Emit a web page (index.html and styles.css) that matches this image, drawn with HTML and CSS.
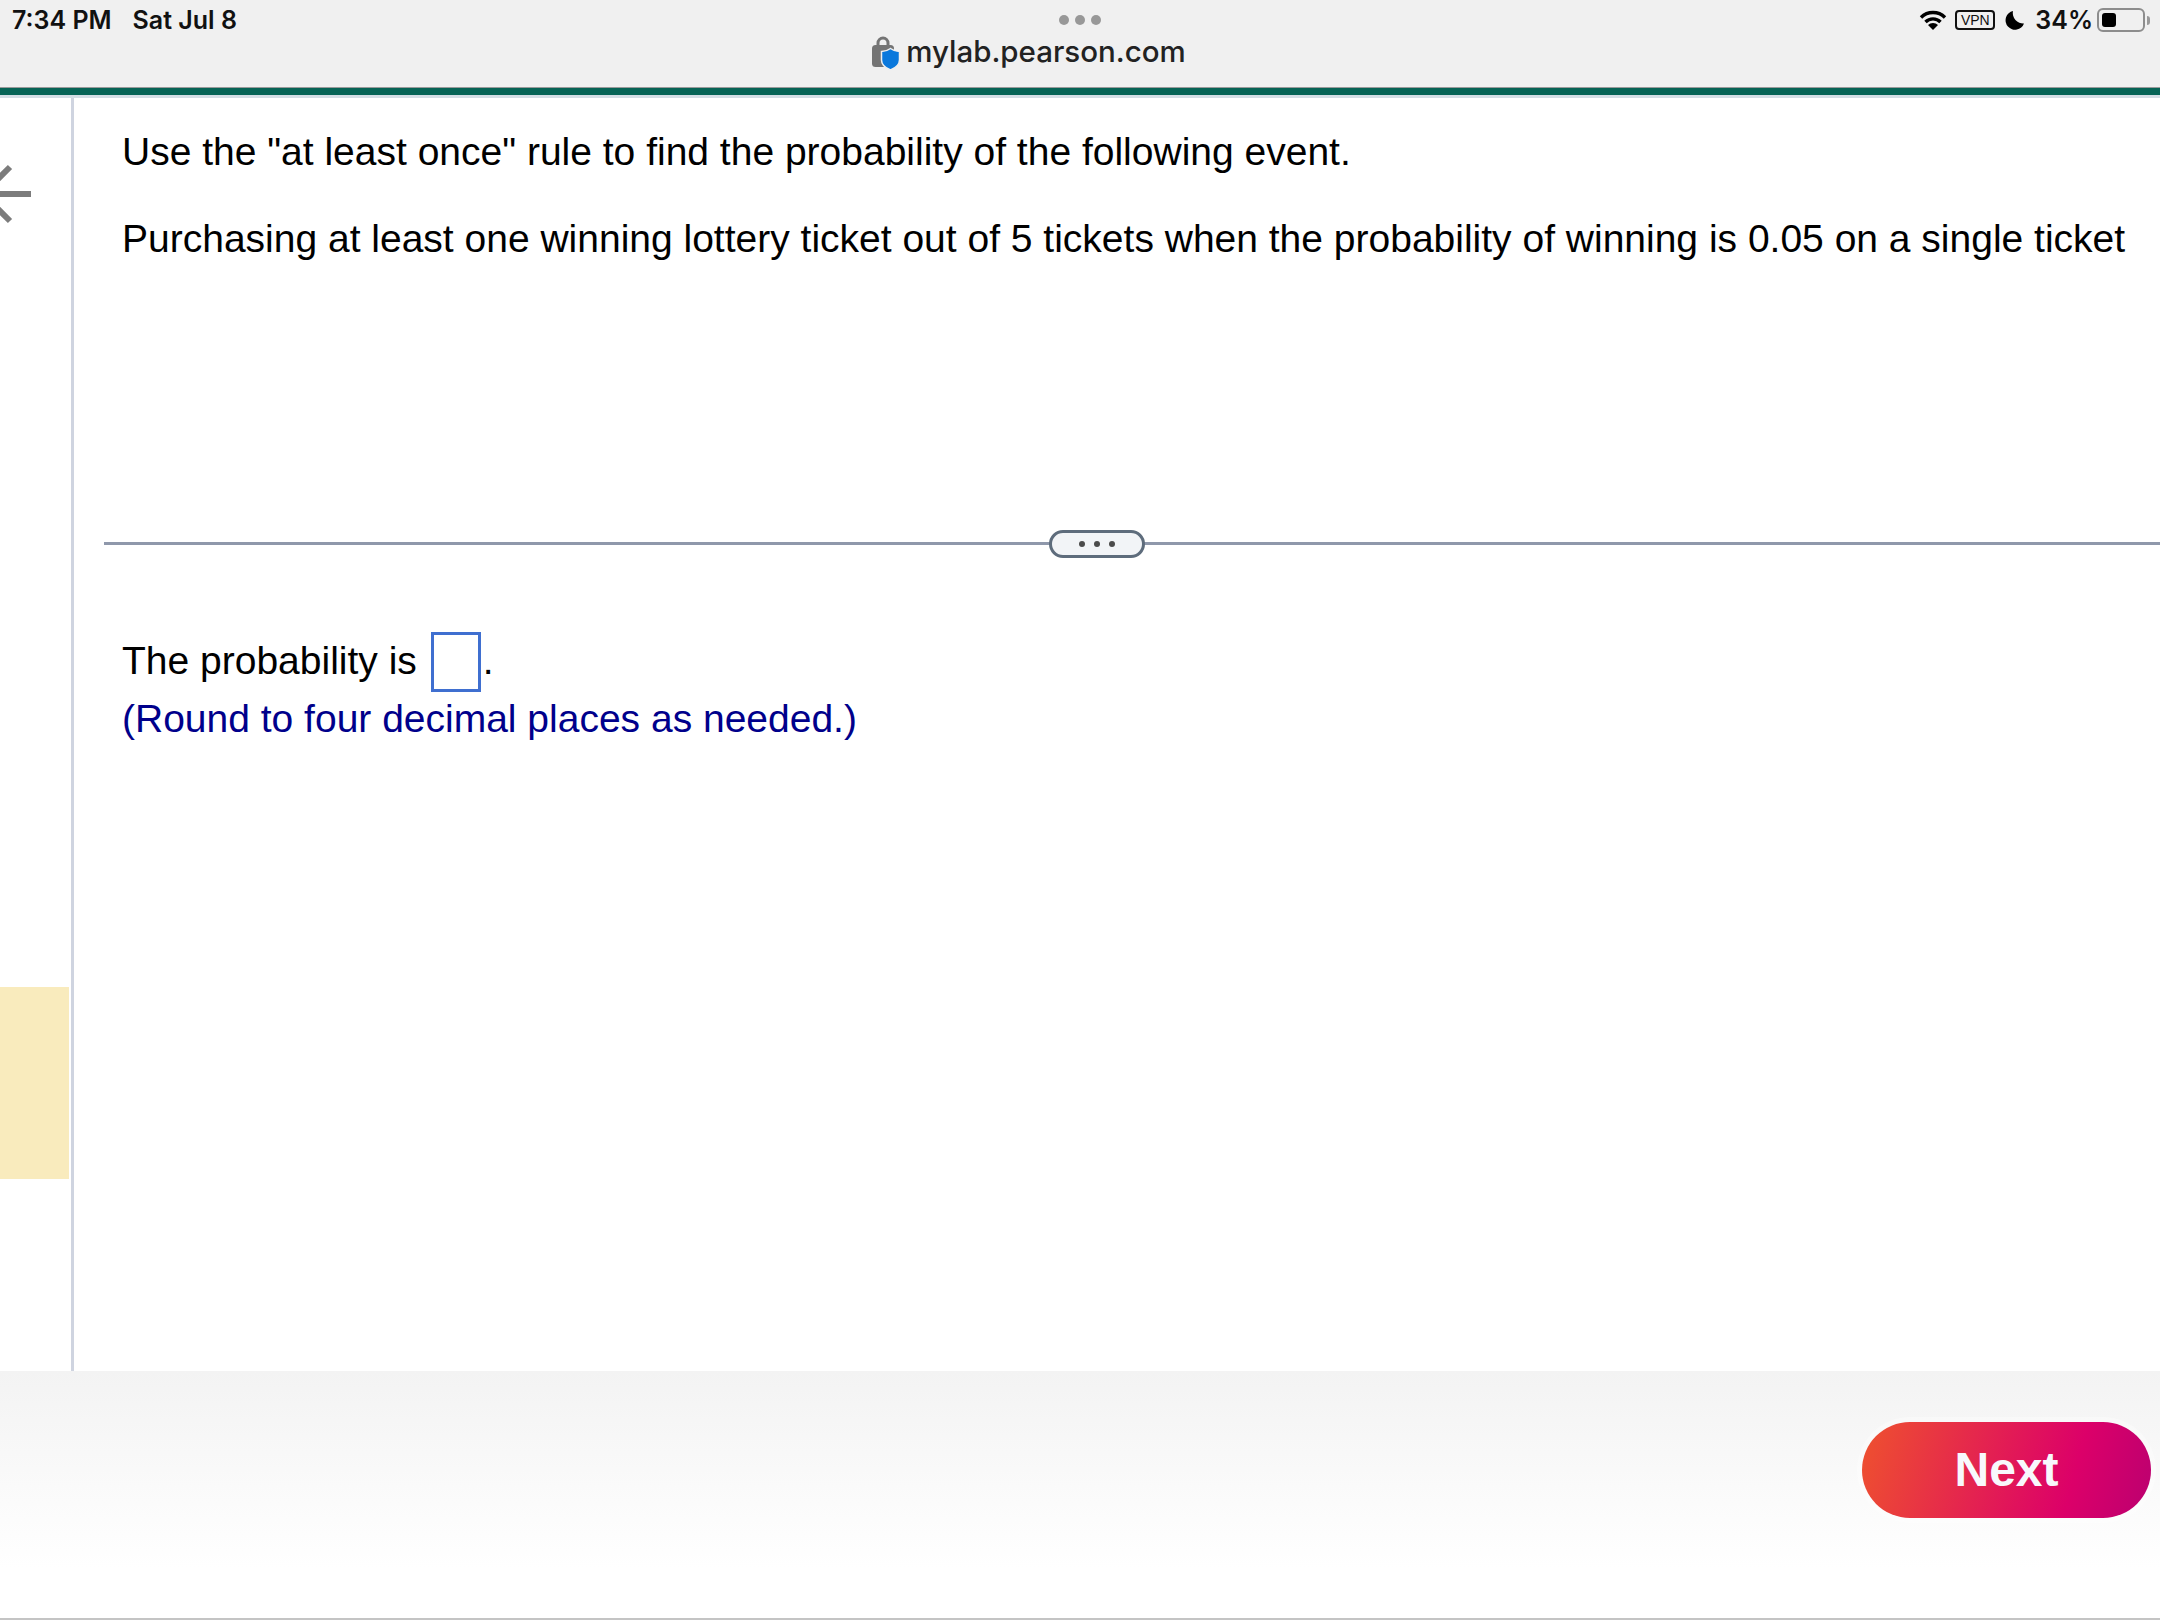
FILE: index.html
```html
<!DOCTYPE html>
<html lang="en">
<head>
<meta charset="utf-8">
<title>mylab.pearson.com</title>
<link rel="stylesheet" href="styles.css">
</head>
<body>
<header class="topbar">
  <div class="clock"><span>7:34 PM</span><span>Sat Jul 8</span></div>
  <div class="address">
    <div class="dots"><i></i><i></i><i></i></div>
    <div class="url">
      <svg class="lock" width="30" height="36" viewBox="0 0 30 36">
        <path d="M7 10V8a5 5 0 0 1 10 0v2" fill="none" stroke="#747474" stroke-width="3"/>
        <rect x="1" y="10" width="22" height="22" rx="3.5" fill="#747474"/>
        <path d="M19.500 13.500c2.500 2 5 2.800 9 3v8.500c0 4.800-3.500 7.800-9 10-5.500-2.200-9-5.200-9-10v-8.500c4-.2 6.500-1 9-3z" fill="#0a78dc" stroke="#f0f0f0" stroke-width="1.500"/>
      </svg>
      <span>mylab.pearson.com</span>
    </div>
  </div>
  <div class="status">
    <svg width="28" height="20" viewBox="0 0 28 20">
      <path d="M2 7.500a17 17 0 0 1 24 0M6.500 12a10.500 10.500 0 0 1 15 0" fill="none" stroke="#000" stroke-width="3.400"/>
      <path d="M14 20l-5-5a7 7 0 0 1 10 0z" fill="#000"/>
    </svg>
    <span class="vpn">VPN</span>
    <svg class="moon" width="20" height="20" viewBox="0 0 20 20">
      <path d="M8 1a9.500 9.500 0 1 0 11 12.500A10.500 10.500 0 0 1 8 1z" fill="#000"/>
    </svg>
    <span class="pct">34%</span>
    <span class="battery"><b></b></span>
    <span class="nub"></span>
  </div>
</header>
<div class="rule"></div>
<div class="stage">
  <aside class="side">
    <svg class="back" width="33" height="66" viewBox="0 0 33 66">
      <path d="M0 31h31M10 4L-14 28M10 58L-14 34" fill="none" stroke="#7c7c7c" stroke-width="6"/>
    </svg>
    <div class="note"></div>
  </aside>
  <main class="content">
    <section class="question">
      <p>Use the "at least once" rule to find the probability of the following event.</p>
      <p>Purchasing at least one winning lottery ticket out of 5 tickets when the probability of winning is 0.05 on a single ticket</p>
    </section>
    <div class="divider">
      <div class="handle"><i></i><i></i><i></i></div>
    </div>
    <section class="answer">
      <p class="line">The probability is <span class="box"></span>.</p>
      <p class="hint">(Round to four decimal places as needed.)</p>
    </section>
  </main>
</div>
<footer class="foot">
  <button class="next">Next</button>
</footer>
</body>
</html>
```
FILE: styles.css
```css
* { box-sizing: border-box; }
html, body { margin: 0; padding: 0; }
body {
  width: 2160px;
  height: 1620px;
  display: flex;
  flex-direction: column;
  background: #fff;
  overflow: hidden;
  font-family: "Liberation Sans", Arial, sans-serif;
  color: #000;
}
.topbar {
  height: 87px;
  flex: none;
  background: #f0f0f0;
  display: grid;
  grid-template-columns: 1fr auto 1fr;
  align-items: start;
  font-family: Inter, "Liberation Sans", sans-serif;
}
.clock {
  display: flex;
  gap: 21px;
  padding: 5px 0 0 12px;
  font-size: 25px;
  font-weight: 600;
  line-height: 30px;
  color: #111;
}
.address {
  display: flex;
  flex-direction: column;
  align-items: center;
  padding-top: 15px;
}
.dots { display: flex; gap: 6px; margin-left: 0; }
.dots i { width: 10px; height: 10px; border-radius: 50%; background: #989898; }
.url {
  display: flex;
  align-items: center;
  gap: 5px;
  margin-top: 6px;
  margin-left: -103px;
  font-size: 29.500px;
  font-weight: 500;
  line-height: 40px;
  color: #222;
}
.lock { margin-top: 4px; }
.status {
  display: flex;
  justify-content: flex-end;
  align-items: center;
  height: 40px;
  padding-right: 10px;
  color: #111;
}
.vpn {
  margin-left: 8px;
  width: 40px;
  height: 20px;
  border: 2px solid #111;
  border-radius: 4px;
  font: 500 14px/16px "Liberation Sans", sans-serif;
  text-align: center;
}
.moon { margin-left: 10px; }
.pct { margin-left: 10px; font-size: 25px; font-weight: 600; }
.battery {
  margin-left: 4px;
  width: 48px;
  height: 24px;
  padding: 3px;
  border: 2px solid #8d8d8d;
  border-radius: 6px;
}
.battery b { display: block; width: 14px; height: 14px; background: #000; border-radius: 3px; }
.nub { width: 3px; height: 9px; margin-left: 2px; background: #999; border-radius: 0 3px 3px 0; }
.rule {
  height: 11px;
  flex: none;
  background: #066355;
  border-top: 1px solid #9a9a9a;
  border-bottom: 3px solid #d3dde4;
}
.stage { height: 1273px; flex: none; display: flex; }
.side {
  width: 74px;
  flex: none;
  border-right: 3px solid #cfd4e0;
  padding-top: 65px;
  background: #fff;
  overflow: hidden;
}
.back { display: block; }
.note {
  margin-top: 758px;
  width: 69px;
  height: 192px;
  background: #f9ebbd;
}
.content { flex: 1; min-width: 0; }
.question { height: 444px; padding: 32px 0 0 48px; }
.question p { margin: 0 0 43px; font-size: 39px; line-height: 44px; white-space: nowrap; }
.divider {
  margin-left: 30px;
  height: 3px;
  background: #8f98ab;
  display: flex;
  justify-content: center;
  align-items: center;
  padding-right: 30px;
}
.handle {
  width: 96px;
  height: 28px;
  flex: none;
  margin-left: -41px;
  background: #f2f4f7;
  border: 3px solid #5e6c7c;
  border-radius: 14px;
  display: flex;
  justify-content: center;
  align-items: center;
  gap: 9px;
}
.handle i { width: 6px; height: 6px; border-radius: 50%; background: #4b4b4b; }
.answer { padding: 87px 0 0 48px; font-size: 39px; }
.answer p { margin: 0; line-height: 57px; white-space: nowrap; }
.answer .hint { margin-top: -2px; color: #00008b; }
.box {
  display: inline-block;
  width: 50px;
  height: 60px;
  margin: 0 2px 0 3px;
  vertical-align: -18px;
  border: 3px solid #3f6fd0;
}
.foot {
  height: 249px;
  flex: none;
  border-bottom: 2px solid #c4c4c4;
  background: linear-gradient(#f3f3f3, #fff 80%);
  display: flex;
  justify-content: flex-end;
  align-items: flex-start;
  padding: 51px 9px 0 0;
}
.next {
  width: 289px;
  height: 96px;
  border: 0;
  border-radius: 48px;
  background: linear-gradient(105deg, #ee4f30 2%, #dc0069 72%, #bb0070 100%);
  box-shadow: 0 0 0 5px rgba(255,255,255,.35);
  color: #f8f8fc;
  font: 700 48px/96px "Liberation Sans", Arial, sans-serif;
  padding: 0;
}
```
